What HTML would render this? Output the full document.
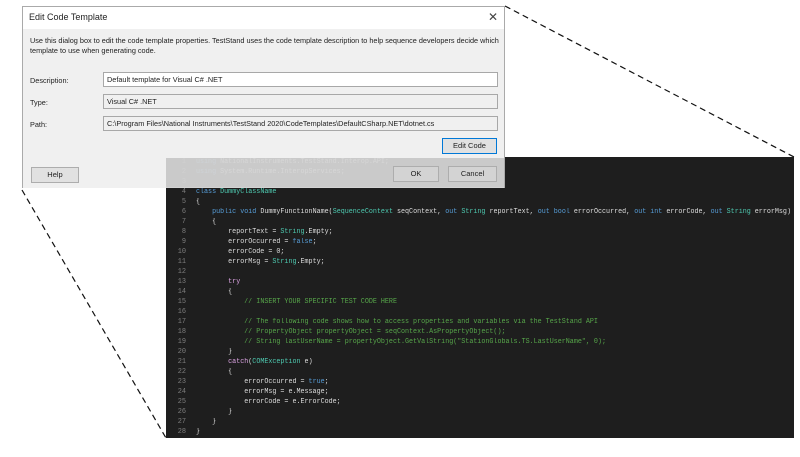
<!DOCTYPE html>
<html><head><meta charset="utf-8"><style>
body{margin:0;width:800px;height:457px;background:#fff;position:relative;overflow:hidden;font-family:"Liberation Sans",sans-serif}
#code{position:absolute;left:166px;top:157px;width:628px;height:281px;background:#1e1e1e;overflow:hidden}
.ln{position:absolute;left:0;width:20px;text-align:right;color:#7e7e7e;font:6.9px "Liberation Mono",monospace}
.cl{position:absolute;left:30px;white-space:pre;color:#dcdcdc;font:6.9px "Liberation Mono",monospace;transform:scaleX(0.972);transform-origin:0 0}
.k{color:#569cd6}.t{color:#4ec9b0}.c{color:#57a64a}.s{color:#d69d85}.p{color:#d8a0df}.f{color:#dcdcaa}
#dlg{position:absolute;left:22px;top:6px;width:483px;height:182px;border:1px solid #aaa;box-sizing:border-box}
#top{position:absolute;left:0;top:0;width:100%;height:151px;background:#f0f0f0}
#bot{position:absolute;left:0;top:151px;width:100%;height:30px;background:rgba(214,214,214,0.94)}
#bot2{position:absolute;left:0;top:151px;width:143px;height:30px;background:#f0f0f0}
#title{position:absolute;left:0;top:0;width:100%;height:22px;background:#fff;font-size:9px;color:#222}
.txt{position:absolute;font-size:7.3px;color:#222;white-space:nowrap}
.in{position:absolute;left:80px;width:395px;height:15px;border:1px solid #a8a8a8;box-sizing:border-box;font-size:7.3px;padding:2px 0 0 3px;color:#222}
.btn{position:absolute;height:16px;border:1px solid #adadad;background:#e1e1e1;box-sizing:border-box;font-size:7.5px;text-align:center;line-height:14px;color:#222}
</style></head><body>
<svg style="position:absolute;left:0;top:0" width="800" height="457"><g stroke="#111" stroke-width="1.2" stroke-dasharray="6,4" fill="none"><line x1="505" y1="6" x2="794" y2="157"/><line x1="22" y1="190" x2="166" y2="438"/></g></svg>
<div id="code">
<div class="ln" style="top:1px">1</div><div class="cl" style="top:1px"><span class="k">using</span> NationalInstruments.TestStand.Interop.API;</div>
<div class="ln" style="top:11px">2</div><div class="cl" style="top:11px"><span class="k">using</span> System.Runtime.InteropServices;</div>
<div class="ln" style="top:21px">3</div>
<div class="ln" style="top:31px">4</div><div class="cl" style="top:31px"><span class="k">class</span> <span class="t">DummyClassName</span></div>
<div class="ln" style="top:41px">5</div><div class="cl" style="top:41px">{</div>
<div class="ln" style="top:51px">6</div><div class="cl" style="top:51px">    <span class="k">public void</span> DummyFunctionName(<span class="t">SequenceContext</span> seqContext, <span class="k">out</span> <span class="t">String</span> reportText, <span class="k">out bool</span> errorOccurred, <span class="k">out int</span> errorCode, <span class="k">out</span> <span class="t">String</span> errorMsg)</div>
<div class="ln" style="top:61px">7</div><div class="cl" style="top:61px">    {</div>
<div class="ln" style="top:71px">8</div><div class="cl" style="top:71px">        reportText = <span class="t">String</span>.Empty;</div>
<div class="ln" style="top:81px">9</div><div class="cl" style="top:81px">        errorOccurred = <span class="k">false</span>;</div>
<div class="ln" style="top:91px">10</div><div class="cl" style="top:91px">        errorCode = 0;</div>
<div class="ln" style="top:101px">11</div><div class="cl" style="top:101px">        errorMsg = <span class="t">String</span>.Empty;</div>
<div class="ln" style="top:111px">12</div>
<div class="ln" style="top:121px">13</div><div class="cl" style="top:121px">        <span class="p">try</span></div>
<div class="ln" style="top:131px">14</div><div class="cl" style="top:131px">        {</div>
<div class="ln" style="top:141px">15</div><div class="cl" style="top:141px">            <span class="c">// INSERT YOUR SPECIFIC TEST CODE HERE</span></div>
<div class="ln" style="top:151px">16</div>
<div class="ln" style="top:161px">17</div><div class="cl" style="top:161px">            <span class="c">// The following code shows how to access properties and variables via the TestStand API</span></div>
<div class="ln" style="top:171px">18</div><div class="cl" style="top:171px">            <span class="c">// PropertyObject propertyObject = seqContext.AsPropertyObject();</span></div>
<div class="ln" style="top:181px">19</div><div class="cl" style="top:181px">            <span class="c">// String lastUserName = propertyObject.GetValString("StationGlobals.TS.LastUserName", 0);</span></div>
<div class="ln" style="top:191px">20</div><div class="cl" style="top:191px">        }</div>
<div class="ln" style="top:201px">21</div><div class="cl" style="top:201px">        <span class="p">catch</span>(<span class="t">COMException</span> e)</div>
<div class="ln" style="top:211px">22</div><div class="cl" style="top:211px">        {</div>
<div class="ln" style="top:221px">23</div><div class="cl" style="top:221px">            errorOccurred = <span class="k">true</span>;</div>
<div class="ln" style="top:231px">24</div><div class="cl" style="top:231px">            errorMsg = e.Message;</div>
<div class="ln" style="top:241px">25</div><div class="cl" style="top:241px">            errorCode = e.ErrorCode;</div>
<div class="ln" style="top:251px">26</div><div class="cl" style="top:251px">        }</div>
<div class="ln" style="top:261px">27</div><div class="cl" style="top:261px">    }</div>
<div class="ln" style="top:271px">28</div><div class="cl" style="top:271px">}</div>
</div>
<div id="dlg">
<div id="top"></div><div id="bot"></div><div id="bot2"></div>
<div id="title"><span style="position:absolute;left:6px;top:5px">Edit Code Template</span><span style="position:absolute;right:6px;top:3px;font-size:12px;color:#444">✕</span></div>
<div class="txt" style="left:7px;top:29px">Use this dialog box to edit the code template properties. TestStand uses the code template description to help sequence developers decide which</div>
<div class="txt" style="left:7px;top:39px">template to use when generating code.</div>
<div class="txt" style="left:7px;top:69px">Description:</div>
<div class="txt" style="left:7px;top:91px">Type:</div>
<div class="txt" style="left:7px;top:113px">Path:</div>
<div class="in" style="top:65px;background:#fff">Default template for Visual C# .NET</div>
<div class="in" style="top:87px;background:#f0f0f0">Visual C# .NET</div>
<div class="in" style="top:109px;background:#f0f0f0">C:\Program Files\National Instruments\TestStand 2020\CodeTemplates\DefaultCSharp.NET\dotnet.cs</div>
<div class="btn" style="left:419px;top:131px;width:55px;border-color:#0078d7">Edit Code</div>
<div class="btn" style="left:8px;top:160px;width:48px">Help</div>
<div class="btn" style="left:370px;top:159px;width:46px;background:#d3d3d3">OK</div>
<div class="btn" style="left:425px;top:159px;width:49px;background:#d3d3d3">Cancel</div>
</div>
</body></html>
